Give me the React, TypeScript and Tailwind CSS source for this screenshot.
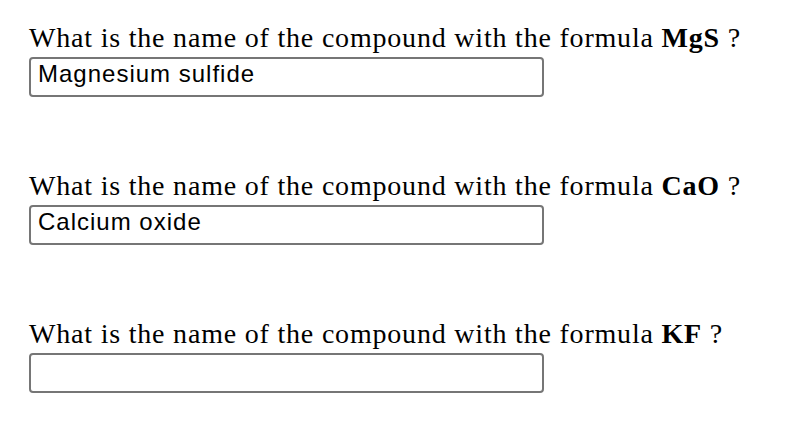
import React from 'react';

const questions = [
  { formula: 'MgS', answer: 'Magnesium sulfide' },
  { formula: 'CaO', answer: 'Calcium oxide' },
  { formula: 'KF', answer: '' },
];

const Question = ({ formula, answer }: { formula: string; answer: string }) => {
  return (
    <div>
      <p className="text-[28px] leading-[31px] tracking-[0.8px] text-black">
        What is the name of the compound with the formula <b>{formula}</b> ?
      </p>
      <input
        type="text"
        defaultValue={answer}
        className="mt-[4px] block w-[515px] h-[40px] rounded-[4px] border-2 border-[#767676] bg-white pl-[7px] pr-[7px] pb-[6px] text-[24px] tracking-[1px] text-black outline-none font-['Liberation_Sans',Arial,sans-serif]"
      />
    </div>
  );
};

export default function App() {
  return (
    <div className="min-h-screen bg-white pl-[29px] pt-[22px] font-['Liberation_Serif','Times_New_Roman',serif]">
      <div className="flex flex-col gap-[73px]">
        {questions.map((q) => (
          <Question key={q.formula} formula={q.formula} answer={q.answer} />
        ))}
      </div>
    </div>
  );
}
